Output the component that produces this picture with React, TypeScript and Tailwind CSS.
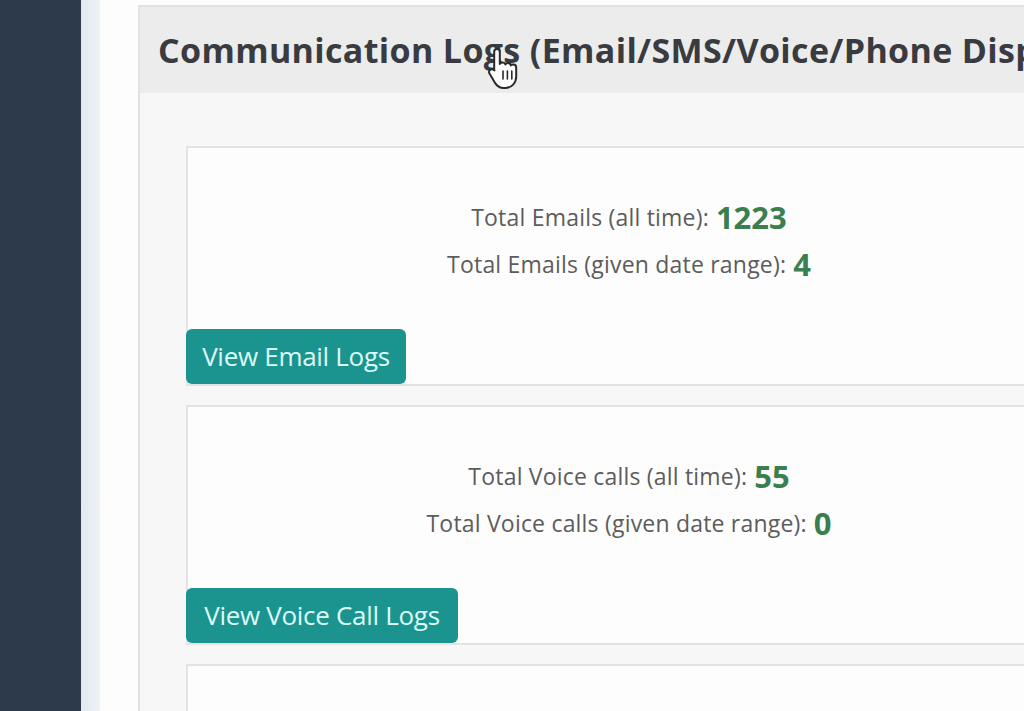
import React from "react";

function HandCursor() {
  return (
    <svg
      className="absolute left-[487px] top-[46px]"
      width="32"
      height="44"
      viewBox="0 0 16 22"
      fill="none"
    >
      <path
        d="M5 1.5c.8 0 1.4.6 1.4 1.4V9c.3-.5.8-.8 1.4-.8.7 0 1.2.4 1.4 1 .3-.4.8-.7 1.3-.7.7 0 1.3.5 1.4 1.2.3-.3.7-.5 1.2-.5.9 0 1.5.7 1.5 1.6v4.6c0 3-2.3 5.6-5.4 5.6H8.3c-1.8 0-3.2-.9-4.1-2.3L1.3 13.9c-.5-.8-.3-1.7.4-2.1.7-.4 1.5-.2 2 .4l-.1-.1V2.9c0-.8.6-1.4 1.4-1.4z"
        fill="#ffffff"
        stroke="#2a2a2a"
        strokeWidth="1"
        strokeLinejoin="round"
      />
      <path d="M8 12.5v4M10.2 12.5v4M12.4 12.5v4" stroke="#2a2a2a" strokeWidth="0.8" strokeLinecap="round" />
    </svg>
  );
}

function StatCard({
  l1,
  v1,
  l2,
  v2,
  button,
  btnW,
}: {
  l1: string;
  v1: string;
  l2: string;
  v2: string;
  button: string;
  btnW: string;
}) {
  return (
    <div className="flex h-[240px] w-[886px] shrink-0 flex-col border-2 border-[#e3e3e3] bg-[#fdfdfd]">
      <div className="flex flex-col items-center pt-[46px] font-['Open_Sans',sans-serif] text-[#5c5c5c]">
        <div className="flex h-[47px] items-center whitespace-nowrap text-[23px] tracking-[0.2px]">
          <span>{l1}</span>
          <span className="ml-[7px] text-[31px] font-bold tracking-[0px] text-[#3c7f4e]">{v1}</span>
        </div>
        <div className="flex h-[47px] items-center whitespace-nowrap text-[23px] tracking-[0.2px]">
          <span>{l2}</span>
          <span className="ml-[7px] text-[31px] font-bold tracking-[0px] text-[#3c7f4e]">{v2}</span>
        </div>
      </div>
      <div className="mt-auto -ml-[2px]">
        <button
          className={`flex h-[55px] items-center justify-center rounded-[6px] bg-[#1b9490] font-['Open_Sans',sans-serif] text-[26px] tracking-[-0.3px] text-[#dcfbf7] ${btnW}`}
        >
          {button}
        </button>
      </div>
    </div>
  );
}

export default function App() {
  return (
    <div className="relative flex h-[711px] w-[1024px] overflow-hidden bg-[#fdfdfd]">
      <div className="w-[81px] shrink-0 bg-[#2c3a4b]" />
      <div className="w-[19px] shrink-0 bg-gradient-to-r from-[#e3e9ee] to-[#eef2f5]" />
      <div className="min-w-0 flex-1 pl-[38px] pt-[5px]">
        <div className="w-[1000px] border-2 border-[#e2e2e2] bg-[#f7f7f7]">
          <div className="flex h-[86px] items-center overflow-hidden bg-[#ececec] pl-[18px]">
            <h1 className="whitespace-nowrap font-['Open_Sans',sans-serif] text-[34px] font-bold tracking-[0.35px] text-[#393b40]">
              Communication Logs (Email/SMS/Voice/Phone Dispatch)
            </h1>
          </div>
          <div className="flex flex-col gap-[19px] pl-[46px] pt-[53px]">
            <StatCard
              l1="Total Emails (all time):"
              v1="1223"
              l2="Total Emails (given date range):"
              v2="4"
              button="View Email Logs"
              btnW="w-[220px]"
            />
            <StatCard
              l1="Total Voice calls (all time):"
              v1="55"
              l2="Total Voice calls (given date range):"
              v2="0"
              button="View Voice Call Logs"
              btnW="w-[272px]"
            />
            <div className="h-[240px] w-[886px] shrink-0 border-2 border-[#e3e3e3] bg-[#fdfdfd]" />
          </div>
        </div>
      </div>
      <HandCursor />
    </div>
  );
}
